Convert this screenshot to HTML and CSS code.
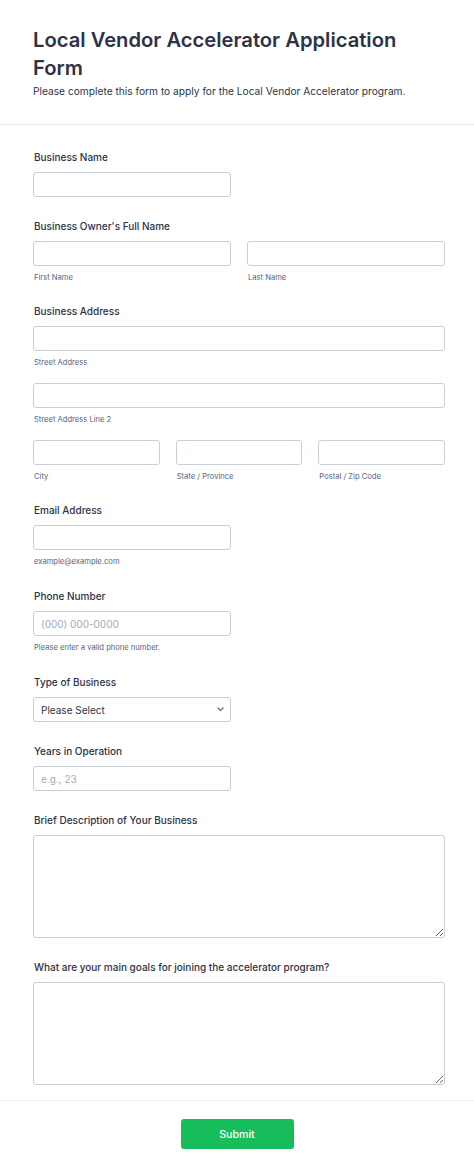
FILE: index.html
```html
<!DOCTYPE html>
<html lang="en">
<head>
    <meta charset="UTF-8">
    <meta name="viewport" content="width=device-width, initial-scale=1.0">
    <title>Local Vendor Accelerator Application Form</title>
    <link rel="stylesheet" href="styles.css">
</head>
<body>
    <div class="header">
        <h1 class="form-title">Local Vendor Accelerator Application Form</h1>
        <p class="form-subtitle">Please complete this form to apply for the Local Vendor Accelerator program.</p>
    </div>

    <form class="form-body">
        <div class="field">
            <label class="field-label">Business Name</label>
            <input type="text" class="input half">
        </div>

        <div class="field with-sub">
            <label class="field-label">Business Owner's Full Name</label>
            <div class="row two">
                <div>
                    <input type="text" class="input">
                    <span class="sublabel">First Name</span>
                </div>
                <div>
                    <input type="text" class="input">
                    <span class="sublabel">Last Name</span>
                </div>
            </div>
        </div>

        <div class="field with-sub">
            <label class="field-label">Business Address</label>
            <div class="stack">
                <div>
                    <input type="text" class="input">
                    <span class="sublabel">Street Address</span>
                </div>
                <div>
                    <input type="text" class="input">
                    <span class="sublabel">Street Address Line 2</span>
                </div>
                <div class="row three">
                    <div>
                        <input type="text" class="input">
                        <span class="sublabel">City</span>
                    </div>
                    <div>
                        <input type="text" class="input">
                        <span class="sublabel">State / Province</span>
                    </div>
                    <div>
                        <input type="text" class="input">
                        <span class="sublabel">Postal / Zip Code</span>
                    </div>
                </div>
            </div>
        </div>

        <div class="field with-sub single">
            <label class="field-label">Email Address</label>
            <input type="email" class="input half">
            <span class="sublabel">example@example.com</span>
        </div>

        <div class="field with-sub single">
            <label class="field-label">Phone Number</label>
            <input type="tel" class="input half" placeholder="(000) 000-0000">
            <span class="sublabel">Please enter a valid phone number.</span>
        </div>

        <div class="field">
            <label class="field-label">Type of Business</label>
            <div class="select-wrap half">
                <select class="input select">
                    <option>Please Select</option>
                </select>
                <svg class="chevron" width="7" height="5" viewBox="0 0 7 5"><path d="M1 1 L3.5 3.6 L6 1" fill="none" stroke="#57647e" stroke-width="1.2" stroke-linecap="round" stroke-linejoin="round"/></svg>
            </div>
        </div>

        <div class="field">
            <label class="field-label">Years in Operation</label>
            <input type="number" class="input half" placeholder="e.g., 23">
        </div>

        <div class="field">
            <label class="field-label">Brief Description of Your Business</label>
            <textarea class="input textarea"></textarea>
        </div>

        <div class="field last">
            <label class="field-label">What are your main goals for joining the accelerator program?</label>
            <textarea class="input textarea"></textarea>
        </div>
    </form>

    <div class="footer">
        <button type="submit" class="submit-btn">Submit</button>
    </div>
</body>
</html>
```

FILE: styles.css
```css
body { margin: 0; padding: 0; background: #fff; font-family: Inter, "Noto Sans", sans-serif; color: #2c3345; }

.header { padding: 26px 29px 25px 33px; border-bottom: 1px solid #e6e8ec; }
.form-title { margin: 0; font-size: 20.2px; line-height: 28px; font-weight: 600; color: #2c3345; }
.form-subtitle { margin: 1px 0 0; font-size: 10.2px; line-height: 16px; color: #2c3345; }

.form-body { padding: 23px 29px 0 33px; }
.field { margin-bottom: 20px; }
.field.with-sub { margin-bottom: 18px; }
.field.single { margin-bottom: 19px; }
.field.last { margin-bottom: 15px; }
.field-label { display: block; font-size: 10px; line-height: 18px; font-weight: 500; margin: 0 0 6px 1px; color: #2c3345; }

.input { display: block; box-sizing: border-box; width: 100%; height: 25px; border: 1px solid #c9ced8; border-radius: 3px; background: #fff; padding: 0 7px; font-family: inherit; font-size: 10px; color: #2c3345; margin: 0; }
.input::placeholder { color: #a4acbb; }
.half { width: 198px; }

.sublabel { display: block; margin: 6px 0 0 1px; font-size: 7.6px; line-height: 12px; color: #57647e; }

.row { display: grid; column-gap: 16px; }
.row.two { grid-template-columns: 1fr 1fr; }
.row.three { grid-template-columns: 1fr 1fr 1fr; }
.stack { display: flex; flex-direction: column; gap: 14px; }

.select-wrap { position: relative; }
.select { appearance: none; -webkit-appearance: none; }
.chevron { position: absolute; right: 7px; top: 10px; }

.textarea { height: 103px; resize: vertical; padding: 6px 7px; }

.footer { border-top: 1px solid #eceef1; padding: 18px 0 26px; display: flex; justify-content: center; }
.submit-btn { width: 113px; height: 30px; border: none; border-radius: 3px; background: #18bd5b; color: #fff; font-family: inherit; font-size: 10.6px; font-weight: 500; cursor: pointer; }
```
